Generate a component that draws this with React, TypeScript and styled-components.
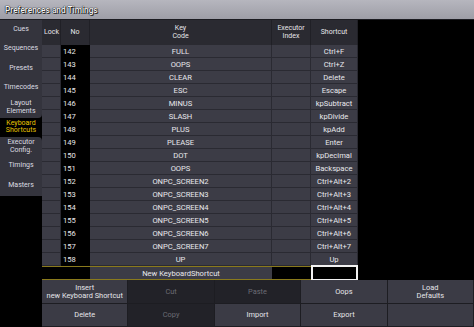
import React from 'react';
import styled, { createGlobalStyle } from 'styled-components';

const GlobalStyle = createGlobalStyle`
  html, body {
    margin: 0;
    padding: 0;
    background: #000;
  }
  * {
    box-sizing: border-box;
  }
`;

const Window = styled.div`
  width: 474px;
  height: 327px;
  background: #000;
  font-family: Roboto, "Liberation Sans", sans-serif;
  color: #e4e4e8;
  display: flex;
  flex-direction: column;
  overflow: hidden;
`;

const TitleBar = styled.div`
  height: 20px;
  flex-shrink: 0;
  background: linear-gradient(#b6b6be, #9e9ea7);
  border-bottom: 1px solid #1c1c22;
  display: flex;
  align-items: center;
  padding-left: 5px;
  font-size: 8.3px;
  font-weight: 500;
  color: #f4f4f6;
  text-shadow: 0 0 1px #000, 0 0 1px #000, 1px 1px 0 #333;
`;

const Body = styled.div`
  flex: 1;
  display: flex;
  min-height: 0;
`;

const Sidebar = styled.div`
  width: 42px;
  flex-shrink: 0;
  display: flex;
  flex-direction: column;
`;

const Tab = styled.div<{ $active?: boolean; $before?: boolean; $after?: boolean }>`
  height: 19.5px;
  display: flex;
  align-items: center;
  justify-content: center;
  text-align: center;
  font-size: 7px;
  line-height: 7.6px;
  background: ${(p) => (p.$active ? '#000' : '#34343d')};
  color: ${(p) => (p.$active ? '#e8c400' : '#dcdce2')};
  border-bottom-right-radius: ${(p) => (p.$before ? '4px' : '0')};
  border-top-right-radius: ${(p) => (p.$after ? '4px' : '0')};
`;

const Main = styled.div`
  flex: 1;
  display: flex;
  flex-direction: column;
  min-width: 0;
`;

const TableArea = styled.div`
  flex: 1;
  display: flex;
`;

const Table = styled.div`
  width: 316px;
  display: grid;
  grid-template-columns: 19px 29px 182px 39px 47px;
  grid-template-rows: 25px repeat(17, 13px) 14px;
  align-content: start;
`;

const HeadCell = styled.div<{ $align?: string }>`
  background: #2a2a31;
  border-right: 1px solid #202026;
  display: flex;
  align-items: center;
  justify-content: ${(p) => p.$align || 'center'};
  padding: 0 2px;
  text-align: center;
  font-size: 7px;
  line-height: 7.6px;
  color: #e6e6ea;
`;

const Cell = styled.div<{ $dark?: boolean; $align?: string }>`
  background: ${(p) => (p.$dark ? '#000' : '#3c3c46')};
  border-bottom: 1px solid ${(p) => (p.$dark ? '#000' : '#2a2a32')};
  border-right: 1px solid ${(p) => (p.$dark ? '#000' : '#2a2a32')};
  display: flex;
  align-items: center;
  justify-content: ${(p) => p.$align || 'center'};
  padding: 0 2px;
  font-size: 7.6px;
  color: #e8e8ec;
  white-space: nowrap;
`;

const NewCell = styled.div<{ $dark?: boolean }>`
  background: ${(p) => (p.$dark ? '#000' : '#3c3c46')};
  border-top: 1px solid #8a7a1c;
  border-bottom: 1px solid #8a7a1c;
  display: flex;
  align-items: center;
  justify-content: center;
  font-size: 7.6px;
  color: #e8e8ec;
`;

const InputCell = styled.div`
  background: #000;
  border: 2px solid #f2f2f2;
  margin-top: -1px;
  height: 16px;
`;

const Buttons = styled.div`
  height: 47px;
  flex-shrink: 0;
  display: grid;
  grid-template-columns: repeat(5, 1fr);
  grid-template-rows: 24px 23px;
`;

const Button = styled.div<{ $disabled?: boolean }>`
  background: ${(p) => (p.$disabled ? '#222228' : '#3b3b45')};
  border-right: 1px solid #1d1d22;
  border-bottom: 1px solid #1d1d22;
  display: flex;
  align-items: center;
  justify-content: center;
  text-align: center;
  font-size: 7.4px;
  line-height: 7.8px;
  color: ${(p) => (p.$disabled ? '#6c6c74' : '#e6e6ea')};
`;

const tabs = [
  'Cues',
  'Sequences',
  'Presets',
  'Timecodes',
  'Layout\nElements',
  'Keyboard\nShortcuts',
  'Executor\nConfig.',
  'Timings',
  'Masters',
];
const activeTab = 5;

const rows: [number, string, string][] = [
  [142, 'FULL', 'Ctrl+F'],
  [143, 'OOPS', 'Ctrl+Z'],
  [144, 'CLEAR', 'Delete'],
  [145, 'ESC', 'Escape'],
  [146, 'MINUS', 'kpSubtract'],
  [147, 'SLASH', 'kpDivide'],
  [148, 'PLUS', 'kpAdd'],
  [149, 'PLEASE', 'Enter'],
  [150, 'DOT', 'kpDecimal'],
  [151, 'OOPS', 'Backspace'],
  [152, 'ONPC_SCREEN2', 'Ctrl+Alt+2'],
  [153, 'ONPC_SCREEN3', 'Ctrl+Alt+3'],
  [154, 'ONPC_SCREEN4', 'Ctrl+Alt+4'],
  [155, 'ONPC_SCREEN5', 'Ctrl+Alt+5'],
  [156, 'ONPC_SCREEN6', 'Ctrl+Alt+6'],
  [157, 'ONPC_SCREEN7', 'Ctrl+Alt+7'],
  [158, 'UP', 'Up'],
];

const buttons: { label: string; disabled?: boolean }[] = [
  { label: 'Insert\nnew Keyboard Shortcut' },
  { label: 'Cut', disabled: true },
  { label: 'Paste', disabled: true },
  { label: 'Oops' },
  { label: 'Load\nDefaults' },
  { label: 'Delete' },
  { label: 'Copy', disabled: true },
  { label: 'Import' },
  { label: 'Export' },
  { label: '' },
];

const lines = (s: string) =>
  s.split('\n').map((l, i) => (
    <React.Fragment key={i}>
      {i > 0 && <br />}
      {l}
    </React.Fragment>
  ));

export default function App() {
  return (
    <>
      <GlobalStyle />
      <Window>
        <TitleBar>Preferences and Timings</TitleBar>
        <Body>
          <Sidebar>
            {tabs.map((t, i) => (
              <Tab
                key={t}
                $active={i === activeTab}
                $before={i === activeTab - 1}
                $after={i === activeTab + 1}
              >
                <span>{lines(t)}</span>
              </Tab>
            ))}
          </Sidebar>
          <Main>
            <TableArea>
              <Table>
                <HeadCell $align="flex-start">Lock</HeadCell>
                <HeadCell>No</HeadCell>
                <HeadCell>
                  <span>{lines('Key\nCode')}</span>
                </HeadCell>
                <HeadCell>
                  <span>{lines('Executor\nIndex')}</span>
                </HeadCell>
                <HeadCell>Shortcut</HeadCell>
                {rows.map(([no, key, sc]) => (
                  <React.Fragment key={no}>
                    <Cell />
                    <Cell $dark $align="flex-start">{no}</Cell>
                    <Cell>{key}</Cell>
                    <Cell />
                    <Cell>{sc}</Cell>
                  </React.Fragment>
                ))}
                <NewCell $dark />
                <NewCell $dark />
                <NewCell>New KeyboardShortcut</NewCell>
                <NewCell $dark />
                <InputCell />
              </Table>
            </TableArea>
            <Buttons>
              {buttons.map((b, i) => (
                <Button key={i} $disabled={b.disabled}>
                  <span>{lines(b.label)}</span>
                </Button>
              ))}
            </Buttons>
          </Main>
        </Body>
      </Window>
    </>
  );
}
